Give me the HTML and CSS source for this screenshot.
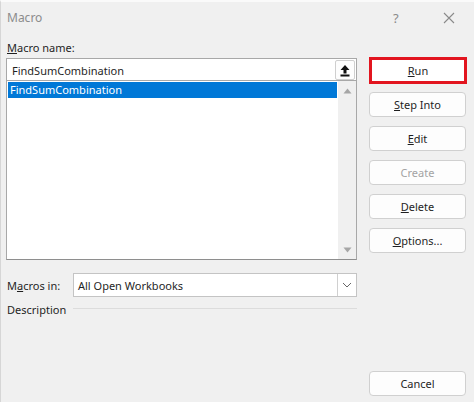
FILE: index.html
```html
<!DOCTYPE html>
<html>
<head>
<meta charset="utf-8">
<link rel="stylesheet" href="styles.css">
</head>
<body>
<div class="dialog">
  <div class="titlebar">
    <span class="title">Macro</span>
    <span class="help">?</span>
    <svg class="close" width="12" height="12" viewBox="0 0 12 12"><path d="M1 1L11 11M11 1L1 11" stroke="#8a8a8a" stroke-width="1.1" fill="none"/></svg>
  </div>
  <div class="content">
    <div class="left">
      <div class="label"><u>M</u>acro name:</div>
      <div class="namebox">
        <span class="nametext">FindSumCombination</span>
        <span class="upbtn"><svg width="12" height="13" viewBox="0 0 12 13"><path d="M6 1L1.5 6H4.5V9.5H7.5V6H10.5Z" fill="#111"/><rect x="1.5" y="10.5" width="9" height="2" fill="#111"/></svg></span>
      </div>
      <div class="list">
        <div class="items">
          <div class="item selected">FindSumCombination</div>
        </div>
        <div class="scrollbar">
          <svg width="9" height="6" viewBox="0 0 9 6"><path d="M4.5 0.5L8.5 5.5H0.5Z" fill="#a6a6a6"/></svg>
          <svg width="9" height="6" viewBox="0 0 9 6"><path d="M0.5 0.5H8.5L4.5 5.5Z" fill="#a6a6a6"/></svg>
        </div>
      </div>
      <div class="macrosin">
        <span class="label2">M<u>a</u>cros in:</span>
        <div class="select">
          <span class="seltext">All Open Workbooks</span>
          <span class="dropbtn"><svg width="10" height="6" viewBox="0 0 10 6"><path d="M1 1L5 5L9 1" stroke="#666" stroke-width="1" fill="none"/></svg></span>
        </div>
      </div>
      <div class="desc">
        <span class="desclabel">Description</span>
        <span class="rule"></span>
      </div>
    </div>
    <div class="right">
      <button class="btn run"><u>R</u>un</button>
      <button class="btn first"><u>S</u>tep Into</button>
      <button class="btn"><u>E</u>dit</button>
      <button class="btn disabled">Create</button>
      <button class="btn"><u>D</u>elete</button>
      <button class="btn"><u>O</u>ptions...</button>
      <button class="btn cancel">Cancel</button>
    </div>
  </div>
</div>
</body>
</html>
```
FILE: styles.css
```css
html, body {
  margin: 0;
  padding: 0;
  background: #f0f0f0;
}
body {
  font-family: "Noto Sans", "Open Sans", sans-serif;
  font-size: 11px;
  color: #1f1f1f;
}
.dialog {
  width: 474px;
  height: 402px;
  box-sizing: border-box;
  border-top: 2px solid #fafafa;
  border-left: 1px solid #d6d6d6;
  background: #f0f0f0;
  display: flex;
  flex-direction: column;
}
.titlebar {
  height: 31px;
  display: flex;
  align-items: center;
  padding-left: 6px;
  color: #8c8c8c;
  font-size: 12px;
}
.title {
  flex: 1;
}
.help {
  width: 14px;
  margin-right: 36px;
  font-size: 13px;
  color: #8a8a8a;
}
.close {
  margin-right: 19px;
}
.content {
  flex: 1;
  display: flex;
  padding: 0 7px 6px 5px;
}
.left {
  width: 351px;
  display: flex;
  flex-direction: column;
}
.label {
  height: 16px;
  line-height: 16px;
  margin-top: 7px;
  margin-bottom: 2px;
  padding-left: 1px;
}
u {
  text-decoration: underline;
  text-underline-offset: 1px;
}
.namebox {
  height: 22px;
  box-sizing: border-box;
  border: 1px solid #a8a8a8;
  border-bottom: none;
  background: #fff;
  display: flex;
  align-items: center;
  padding-left: 5px;
}
.nametext {
  flex: 1;
  padding-top: 1px;
}
.upbtn {
  width: 20px;
  height: 20px;
  box-sizing: border-box;
  border: 1px solid #cfcfcf;
  border-radius: 2px;
  margin-right: 1px;
  margin-top: 1px;
  display: flex;
  align-items: center;
  justify-content: center;
  background: #fdfdfd;
}
.list {
  height: 180px;
  box-sizing: border-box;
  border: 1px solid #a8a8a8;
  border-bottom-color: #8e8e8e;
  background: #fff;
  display: flex;
}
.items {
  flex: 1;
  padding: 1px 1px 0 1px;
}
.item {
  height: 16px;
  line-height: 16px;
  padding-left: 2px;
}
.selected {
  background: #0078d7;
  color: #fff;
}
.scrollbar {
  width: 18px;
  background: #f0f0f0;
  display: flex;
  flex-direction: column;
  justify-content: space-between;
  align-items: center;
  padding: 7px 0 6px;
}
.macrosin {
  margin-top: 13px;
  height: 24px;
  display: flex;
  align-items: center;
}
.label2 {
  width: 66px;
  padding-left: 1px;
}
.select {
  flex: 1;
  height: 24px;
  box-sizing: border-box;
  border: 1px solid #c4c4c4;
  background: #fff;
  display: flex;
  align-items: center;
}
.seltext {
  flex: 1;
  padding-left: 4px;
}
.dropbtn {
  width: 18px;
  height: 22px;
  border-left: 1px solid #d0d0d0;
  display: flex;
  align-items: center;
  justify-content: center;
}
.desc {
  margin-top: 4px;
  height: 16px;
  display: flex;
  align-items: center;
  padding-left: 1px;
}
.desclabel {
  width: 66px;
}
.rule {
  flex: 1;
  height: 1px;
  background: #dcdcdc;
  margin-top: -2px;
}
.right {
  margin-left: 12px;
  width: 98px;
  display: flex;
  flex-direction: column;
}
.btn {
  font-family: inherit;
  font-size: 11px;
  color: #1f1f1f;
  height: 25px;
  box-sizing: border-box;
  border: 1px solid #d0d0d0;
  border-radius: 4px;
  background: #fdfdfd;
  margin: 9px 0 0 0;
  padding: 0;
  width: 97px;
}
.btn.run {
  margin-top: 24px;
  height: 27px;
  width: 98px;
  border: 3px solid #e2151f;
  border-radius: 0;
  background: #fff;
}
.btn.first {
  margin-top: 8px;
}
.btn.disabled {
  color: #a3a3a3;
}
.btn.cancel {
  margin-top: auto;
}
```
